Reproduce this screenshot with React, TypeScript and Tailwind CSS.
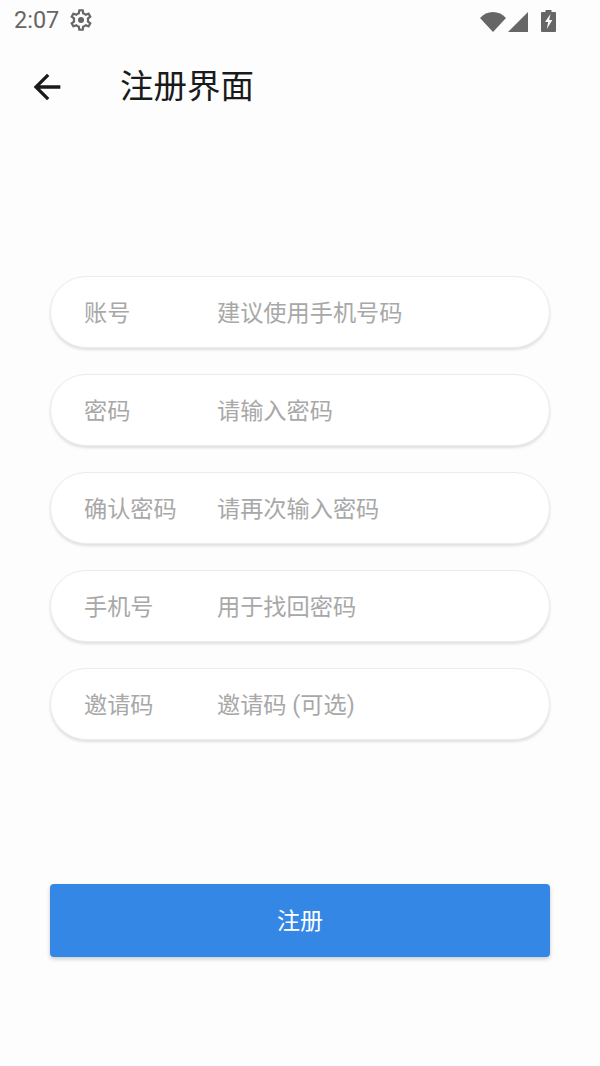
const fields = [
  { label: "账号", placeholder: "建议使用手机号码" },
  { label: "密码", placeholder: "请输入密码" },
  { label: "确认密码", placeholder: "请再次输入密码" },
  { label: "手机号", placeholder: "用于找回密码" },
  { label: "邀请码", placeholder: "邀请码 (可选)" },
];

function GearIcon() {
  return (
    <svg width="26" height="26" viewBox="0 0 24 24" fill="#666666">
      <path
        fillRule="evenodd"
        d="M19.43 12.98c.04-.32.07-.64.07-.98s-.03-.66-.07-.98l2.11-1.65c.19-.15.24-.42.12-.64l-2-3.46c-.12-.22-.39-.3-.61-.22l-2.49 1c-.52-.4-1.08-.73-1.69-.98l-.38-2.65C14.46 2.18 14.25 2 14 2h-4c-.25 0-.46.18-.49.42l-.38 2.65c-.61.25-1.17.59-1.69.98l-2.49-1c-.23-.09-.49 0-.61.22l-2 3.46c-.13.22-.07.49.12.64l2.11 1.65c-.04.32-.07.65-.07.98s.03.66.07.98l-2.11 1.65c-.19.15-.24.42-.12.64l2 3.46c.12.22.39.3.61.22l2.49-1c.52.4 1.08.73 1.69.98l.38 2.65c.03.24.24.42.49.42h4c.25 0 .46-.18.49-.42l.38-2.65c.61-.25 1.17-.59 1.69-.98l2.49 1c.23.09.49 0 .61-.22l2-3.46c.12-.22.07-.49-.12-.64l-2.11-1.65zM17.45 11.27c.04.31.05.52.05.73s-.02.43-.05.73l-.14 1.13.89.7 1.08.84-.7 1.21-1.27-.51-1.04-.42-.9.68c-.43.32-.84.56-1.25.73l-1.06.43-.16 1.13-.2 1.35h-1.4l-.19-1.35-.16-1.13-1.06-.43c-.43-.18-.83-.41-1.23-.71l-.91-.7-1.06.43-1.27.51-.7-1.21 1.08-.84.89-.7-.14-1.13c-.03-.31-.05-.54-.05-.74s.02-.43.05-.73l.14-1.13-.89-.7-1.08-.84.7-1.21 1.27.51 1.04.42.9-.68c.43-.32.84-.56 1.25-.73l1.06-.43.16-1.13.2-1.35h1.39l.19 1.35.16 1.13 1.06.43c.43.18.83.41 1.23.71l.91.7 1.06-.43 1.27-.51.7 1.21-1.07.85-.89.7.14 1.13z"
      />
      <circle cx="12" cy="12" r="2.8" />
    </svg>
  );
}

function StatusIcons() {
  return (
    <div className="flex items-end gap-[2px] mr-[44px] pt-[2px]">
      <svg width="26" height="20" viewBox="0 0 26 20" fill="#666666">
        <path d="M0 6C3.5 2.2 8 0 13 0s9.5 2.2 13 6L13 20z" />
      </svg>
      <svg width="20" height="20" viewBox="0 0 20 20" fill="#666666" className="mr-[11px]">
        <path d="M20 0v20H0z" />
      </svg>
      <svg width="15" height="22" viewBox="0 0 15 22" fill="#666666">
        <path
          fillRule="evenodd"
          d="M4.5 0h6v2H14a1 1 0 0 1 1 1v18a1 1 0 0 1-1 1H1a1 1 0 0 1-1-1V3a1 1 0 0 1 1-1h3.5zM9.5 4 4 12h3.2l-1.4 7 5.6-9H8.2z"
        />
      </svg>
    </div>
  );
}

export default function App() {
  return (
    <div
      className="w-[600px] h-[1066px] bg-[#fdfdfd] overflow-hidden flex flex-col"
      style={{ fontFamily: '"Roboto", "Noto Sans CJK SC", sans-serif' }}
    >
      {/* 상태 표시줄 */}
      <div className="h-[40px] flex items-center justify-between pl-[14px]">
        <div className="flex items-center gap-[9px]">
          <span className="text-[23.5px] text-[#666666] pt-[2px]">2:07</span>
          <GearIcon />
        </div>
        <StatusIcons />
      </div>

      {/* 헤더 */}
      <div className="h-[94px] flex items-center pl-[27px]">
        <svg width="40" height="40" viewBox="0 0 24 24" fill="#1a1a1a">
          <path d="M20 11H7.83l5.59-5.59L12 4l-8 8 8 8 1.41-1.41L7.83 13H20v-2z" />
        </svg>
        <h1 className="ml-[53px] text-[33.5px] font-normal text-[#1a1a1a]">注册界面</h1>
      </div>

      {/* 입력 폼 */}
      <div className="mt-[142px] px-[50px] flex flex-col gap-[26px]">
        {fields.map((field) => (
          <div
            key={field.label}
            className="h-[72px] flex items-center rounded-full bg-white border border-[#ececec] shadow-[0_2px_3px_rgba(0,0,0,0.12)] pl-[33px] pt-[2px] text-[23.2px] text-[#a8a8a8]"
          >
            <span className="w-[133px] shrink-0">{field.label}</span>
            <span>{field.placeholder}</span>
          </div>
        ))}
      </div>

      {/* 등록 버튼 */}
      <div className="mt-[144px] px-[50px]">
        <button className="w-full h-[73px] rounded-[4px] bg-[#3587e6] text-white text-[23px] pt-[3px] shadow-[0_2px_4px_rgba(0,0,0,0.2)]">
          注册
        </button>
      </div>
    </div>
  );
}
